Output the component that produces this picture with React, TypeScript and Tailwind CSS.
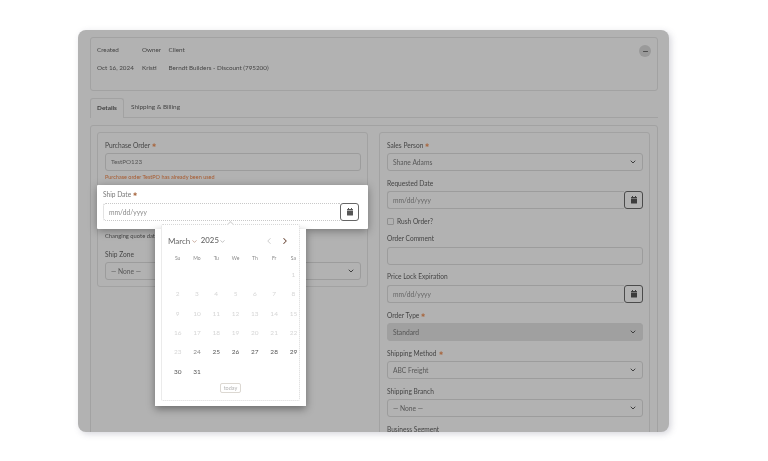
import React from "react";
import { ChevronDown, ChevronLeft, ChevronRight, Minus } from "lucide-react";

function Req() {
	return <span className="ml-[2px] text-[5px] align-[1px] text-[#a8673f]">✱</span>;
}

function CalIcon() {
	return (
		<svg viewBox="0 0 16 16" className="w-[8px] h-[8px]" fill="currentColor">
			<rect x="4" y="0" width="2" height="3" />
			<rect x="10" y="0" width="2" height="3" />
			<path d="M2 3a1 1 0 0 1 1-1h10a1 1 0 0 1 1 1v2H2zM2 6h12v8a1 1 0 0 1-1 1H3a1 1 0 0 1-1-1z" />
		</svg>
	);
}

function Label({ text, req }: { text: string; req?: boolean }) {
	return (
		<div className="h-[11px] mb-[2px] leading-[11px] text-[6.6px] text-[#454545]">
			{text}
			{req && <Req />}
		</div>
	);
}

function SelectBox({ value, disabled }: { value: string; disabled?: boolean }) {
	return (
		<div
			className={`h-[18px] rounded-[3px] border pl-[5px] pr-[5px] flex items-center justify-between text-[6.7px] ${
				disabled
					? "bg-[#a0a0a0] border-[#a0a0a0] text-[#555]"
					: "border-[#9c9c9c] text-[#585858]"
			}`}
		>
			<span>{value}</span>
			<ChevronDown className="w-[8px] h-[8px] text-[#3f3f3f]" strokeWidth={3} />
		</div>
	);
}

function DateBox() {
	return (
		<div className="h-[18px] flex">
			<div className="flex-1 rounded-l-[3px] border border-r-0 border-[#9c9c9c] pl-[5px] flex items-center text-[6.7px] text-[#666]">
				mm/dd/yyyy
			</div>
			<div className="w-[19px] rounded-[3px] border border-[#4b4b4b] flex items-center justify-center text-[#3c3c3c]">
				<CalIcon />
			</div>
		</div>
	);
}

function Field({
	label,
	req,
	children,
}: {
	label: string;
	req?: boolean;
	children: React.ReactNode;
}) {
	return (
		<div className="mb-[7px]">
			<Label text={label} req={req} />
			{children}
		</div>
	);
}

const DAY_NAMES = ["Su", "Mo", "Tu", "We", "Th", "Fr", "Sa"];

// march 2025 starts on a saturday, everything before the 24th is disabled
function Calendar() {
	const days: (number | null)[] = [null, null, null, null, null, null];
	for (let i = 1; i <= 31; i++) days.push(i);

	return (
		<div className="absolute left-[58px] top-full w-[151px] h-[177px] bg-white shadow-[0_3px_8px_rgba(0,0,0,0.4)] px-[6px] z-20">
			<div className="relative -mt-[5px] h-[177px] bg-white border border-dotted border-[#d8d8d8] rounded-[2px]">
				<div className="absolute -top-[3px] left-[66px] w-[5px] h-[5px] rotate-45 bg-white border-l border-t border-[#d8d8d8]" />
				<div className="flex items-center pl-[6px] pr-[9px] pt-[10px] h-[22px] text-[#666]">
					<span className="text-[8px]">March</span>
					<ChevronDown className="w-[7px] h-[7px] ml-[1px] text-[#a5765f]" strokeWidth={2} />
					<span className="text-[7.8px] ml-[2.5px] font-medium">2025</span>
					<ChevronDown className="w-[7px] h-[7px] text-[#999]" strokeWidth={2} />
					<ChevronLeft className="w-[10px] h-[10px] ml-auto text-[#c4c4c4]" strokeWidth={2} />
					<ChevronRight className="w-[10px] h-[10px] ml-[6px] text-[#6b4a3a]" strokeWidth={2.5} />
				</div>
				<div className="grid grid-cols-[repeat(7,19.3px)] ml-[6px] mt-[5px]">
					{DAY_NAMES.map((d) => (
						<div key={d} className="h-[13px] flex items-center justify-center text-[5px] text-[#888]">
							{d}
						</div>
					))}
					{days.map((d, i) => (
						<div
							key={i}
							className={`h-[19.4px] flex items-center justify-center text-[6.5px] ${
								d === null
									? ""
									: d < 24
										? "text-[#d6d6d6]"
										: d === 24
											? "text-[#8b8b8b]"
											: "text-[#555]"
							}`}
						>
							{d}
						</div>
					))}
				</div>
				<div className="absolute bottom-[7px] left-0 right-0 flex justify-center">
					<div className="w-[21px] h-[10px] rounded-[2px] border border-[#dcd8d2] flex items-center justify-center text-[5.5px] text-[#b5b5b5]">
						today
					</div>
				</div>
			</div>
		</div>
	);
}

export default function App() {
	return (
		<div
			className="w-[768px] h-[461px] bg-white pt-[30px] pl-[78px] overflow-hidden"
			style={{ fontFamily: '"Lato", "Liberation Sans", sans-serif' }}
		>
			<div className="w-[591px] h-[402px] rounded-[8px] overflow-hidden bg-[#b2b2b2] shadow-[2px_2px_6px_rgba(120,120,140,0.3)] pt-[7px] pl-[12px] pr-[11px] blur-[0.4px]">
				{/* summary card */}
				<div className="h-[54px] rounded-[3px] border border-[#a2a2a2] pl-[6px] pr-[6px] pt-[5px] relative text-[6.3px] text-[#454545]">
					<div className="flex h-[13px] items-center">
						<span className="w-[45px]">Created</span>
						<span className="w-[26.5px]">Owner</span>
						<span>Client</span>
					</div>
					<div className="flex h-[13px] mt-[5px] items-center">
						<span className="w-[45px]">Oct 16, 2024</span>
						<span className="w-[26.5px]">Kristi</span>
						<span>Berndt Builders - Discount (795200)</span>
					</div>
					<div className="absolute top-[7px] right-[6px] w-[12px] h-[12px] rounded-full bg-[#9a9a9a] flex items-center justify-center">
						<Minus className="w-[7px] h-[7px] text-[#444]" strokeWidth={3} />
					</div>
				</div>

				{/* tabs */}
				<div className="flex h-[20px] mt-[7px] border-b border-[#a2a2a2] text-[6.4px]">
					<div className="w-[34px] h-[20px] pb-[2px] rounded-t-[3px] border border-b-0 border-[#a2a2a2] bg-[#b2b2b2] flex items-center justify-center font-bold text-[#3f3f3f]">
						Details
					</div>
					<div className="ml-[7px] pb-[2px] flex items-center text-[#454545]">Shipping &amp; Billing</div>
				</div>

				{/* form panel */}
				<div className="mt-[7px] h-[320px] rounded-t-[3px] border border-[#a2a2a2] px-[6px] pt-[6px] flex items-start gap-[11px]">
					<div className="w-[271px] rounded-[3px] border border-[#a2a2a2] pl-[7px] pr-[6px] pt-[7px] pb-[6px]">
						<Label text="Purchase Order" req />
						<div className="h-[18px] rounded-[3px] border border-[#9c9c9c] pl-[5px] flex items-center text-[6.3px] text-[#555]">
							TestPO123
						</div>
						<div className="h-[10px] mt-[1px] leading-[10px] text-[5.5px] text-[#a85a2e]">
							Purchase order TestPO has already been used
						</div>

						{/* highlighted field, sits above the dim layer */}
						<div className="relative -ml-[8px] -mr-[7px] mt-[3px] pl-[6px] pr-[9px] pt-[4px] pb-[8px] bg-white shadow-[0_2px_8px_rgba(0,0,0,0.35)] z-10 rounded-[1px]">
							<div className="h-[11px] mb-[3px] leading-[11px] text-[6.6px] text-[#777]">
								Ship Date
								<Req />
							</div>
							<div className="h-[18px] flex">
								<div className="flex-1 rounded-l-[3px] border border-r-0 border-dotted border-[#c8c8c8] pl-[5px] flex items-center text-[6.7px] text-[#888]">
									mm/dd/yyyy
								</div>
								<div className="w-[19px] rounded-[3px] border border-[#666] flex items-center justify-center text-[#555]">
									<CalIcon />
								</div>
							</div>
							<Calendar />
						</div>

						<div className="h-[10px] mt-[2px] leading-[10px] text-[5.8px] text-[#454545]">
							Changing quote date
						</div>
						<div className="mt-[8px]">
							<Label text="Ship Zone" />
							<SelectBox value="— None —" />
						</div>
					</div>

					<div className="w-[271px] h-[320px] rounded-t-[3px] border border-[#a2a2a2] pl-[7px] pr-[6px] pt-[7px]">
						<Field label="Sales Person" req>
							<SelectBox value="Shane Adams" />
						</Field>
						<Field label="Requested Date">
							<DateBox />
						</Field>
						<div className="h-[11px] mb-[6px] flex items-center gap-[3px] text-[6.6px] text-[#454545]">
							<span className="w-[7px] h-[7px] rounded-[1px] border border-[#8f8f8f]" />
							Rush Order?
						</div>
						<div className="mb-[6px]">
							<div className="h-[11px] mb-[3px] leading-[11px] text-[6.6px] text-[#454545]">Order Comment</div>
							<div className="h-[18px] rounded-[3px] border border-[#9c9c9c]" />
						</div>
						<div className="mb-[7px]">
							<div className="h-[11px] mb-[3px] leading-[11px] text-[6.6px] text-[#454545]">Price Lock Expiration</div>
							<DateBox />
						</div>
						<Field label="Order Type" req>
							<SelectBox value="Standard" disabled />
						</Field>
						<Field label="Shipping Method" req>
							<SelectBox value="ABC Freight" />
						</Field>
						<Field label="Shipping Branch">
							<SelectBox value="— None —" />
						</Field>
						<Label text="Business Segment" />
					</div>
				</div>
			</div>
		</div>
	);
}
